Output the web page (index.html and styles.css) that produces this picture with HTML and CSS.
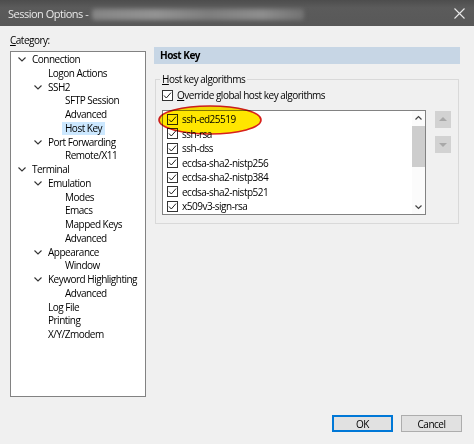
FILE: index.html
```html
<!DOCTYPE html>
<html lang="en">
<head>
    <meta charset="UTF-8">
    <title>Session Options</title>
    <link rel="stylesheet" href="styles.css">
</head>
<body>
    <div class="window">
        <div class="titlebar">
            <span class="title">Session Options -</span>
            <span class="title-blur"></span>
            <svg class="close" width="11" height="11" viewBox="0 0 11 11"><path d="M0.5 0.5 L10.5 10.5 M10.5 0.5 L0.5 10.5" stroke="#e8e8e8" stroke-width="1.1"/></svg>
        </div>

        <div class="content">
            <div class="left-col">
                <div class="label"><u>C</u>ategory:</div>
                <div class="tree">
                    <div class="node l0"><span class="chev"><svg width="8" height="5" viewBox="0 0 8 5"><polyline points="0.5,0.5 4,4 7.5,0.5" fill="none" stroke="#333" stroke-width="1.1"/></svg></span>Connection</div>
                    <div class="node l1"><span class="chev"></span>Logon Actions</div>
                    <div class="node l1"><span class="chev"><svg width="8" height="5" viewBox="0 0 8 5"><polyline points="0.5,0.5 4,4 7.5,0.5" fill="none" stroke="#333" stroke-width="1.1"/></svg></span>SSH2</div>
                    <div class="node l2"><span class="chev"></span>SFTP Session</div>
                    <div class="node l2"><span class="chev"></span>Advanced</div>
                    <div class="node l2"><span class="chev"></span><span class="selected">Host Key</span></div>
                    <div class="node l1"><span class="chev"><svg width="8" height="5" viewBox="0 0 8 5"><polyline points="0.5,0.5 4,4 7.5,0.5" fill="none" stroke="#333" stroke-width="1.1"/></svg></span>Port Forwarding</div>
                    <div class="node l2"><span class="chev"></span>Remote/X11</div>
                    <div class="node l0"><span class="chev"><svg width="8" height="5" viewBox="0 0 8 5"><polyline points="0.5,0.5 4,4 7.5,0.5" fill="none" stroke="#333" stroke-width="1.1"/></svg></span>Terminal</div>
                    <div class="node l1"><span class="chev"><svg width="8" height="5" viewBox="0 0 8 5"><polyline points="0.5,0.5 4,4 7.5,0.5" fill="none" stroke="#333" stroke-width="1.1"/></svg></span>Emulation</div>
                    <div class="node l2"><span class="chev"></span>Modes</div>
                    <div class="node l2"><span class="chev"></span>Emacs</div>
                    <div class="node l2"><span class="chev"></span>Mapped Keys</div>
                    <div class="node l2"><span class="chev"></span>Advanced</div>
                    <div class="node l1"><span class="chev"><svg width="8" height="5" viewBox="0 0 8 5"><polyline points="0.5,0.5 4,4 7.5,0.5" fill="none" stroke="#333" stroke-width="1.1"/></svg></span>Appearance</div>
                    <div class="node l2"><span class="chev"></span>Window</div>
                    <div class="node l1"><span class="chev"><svg width="8" height="5" viewBox="0 0 8 5"><polyline points="0.5,0.5 4,4 7.5,0.5" fill="none" stroke="#333" stroke-width="1.1"/></svg></span>Keyword Highlighting</div>
                    <div class="node l2"><span class="chev"></span>Advanced</div>
                    <div class="node l1"><span class="chev"></span>Log File</div>
                    <div class="node l1"><span class="chev"></span>Printing</div>
                    <div class="node l1"><span class="chev"></span>X/Y/Zmodem</div>
                </div>
            </div>

            <div class="right-col">
                <div class="page-header">Host Key</div>
                <fieldset class="group">
                    <legend><u>H</u>ost key algorithms</legend>
                    <div class="check-row">
                        <svg class="cb" width="11" height="11" viewBox="0 0 11 11"><rect x="0.5" y="0.5" width="10" height="10" fill="#fff" stroke="#333"/><polyline points="2,5.5 4.3,8 9,2.6" fill="none" stroke="#222" stroke-width="1"/></svg>
                        <span><u>O</u>verride global host key algorithms</span>
                    </div>
                    <div class="list-row">
                        <div class="listbox">
                            <div class="items">
                                <div class="item"><svg class="cb" width="11" height="11" viewBox="0 0 11 11"><rect x="0.5" y="0.5" width="10" height="10" fill="#fff" stroke="#333"/><polyline points="2,5.5 4.3,8 9,2.6" fill="none" stroke="#222" stroke-width="1"/></svg>ssh-ed25519</div>
                                <div class="item"><svg class="cb" width="11" height="11" viewBox="0 0 11 11"><rect x="0.5" y="0.5" width="10" height="10" fill="#fff" stroke="#333"/><polyline points="2,5.5 4.3,8 9,2.6" fill="none" stroke="#222" stroke-width="1"/></svg>ssh-rsa</div>
                                <div class="item"><svg class="cb" width="11" height="11" viewBox="0 0 11 11"><rect x="0.5" y="0.5" width="10" height="10" fill="#fff" stroke="#333"/><polyline points="2,5.5 4.3,8 9,2.6" fill="none" stroke="#222" stroke-width="1"/></svg>ssh-dss</div>
                                <div class="item"><svg class="cb" width="11" height="11" viewBox="0 0 11 11"><rect x="0.5" y="0.5" width="10" height="10" fill="#fff" stroke="#333"/><polyline points="2,5.5 4.3,8 9,2.6" fill="none" stroke="#222" stroke-width="1"/></svg>ecdsa-sha2-nistp256</div>
                                <div class="item"><svg class="cb" width="11" height="11" viewBox="0 0 11 11"><rect x="0.5" y="0.5" width="10" height="10" fill="#fff" stroke="#333"/><polyline points="2,5.5 4.3,8 9,2.6" fill="none" stroke="#222" stroke-width="1"/></svg>ecdsa-sha2-nistp384</div>
                                <div class="item"><svg class="cb" width="11" height="11" viewBox="0 0 11 11"><rect x="0.5" y="0.5" width="10" height="10" fill="#fff" stroke="#333"/><polyline points="2,5.5 4.3,8 9,2.6" fill="none" stroke="#222" stroke-width="1"/></svg>ecdsa-sha2-nistp521</div>
                                <div class="item"><svg class="cb" width="11" height="11" viewBox="0 0 11 11"><rect x="0.5" y="0.5" width="10" height="10" fill="#fff" stroke="#333"/><polyline points="2,5.5 4.3,8 9,2.6" fill="none" stroke="#222" stroke-width="1"/></svg>x509v3-sign-rsa</div>
                            </div>
                            <div class="scrollbar">
                                <svg class="sb-arrow" width="13" height="14" viewBox="0 0 13 14"><polyline points="3.5,8.5 6.5,5.5 9.5,8.5" fill="none" stroke="#444" stroke-width="1.2"/></svg>
                                <div class="sb-thumb"></div>
                                <div class="sb-track"></div>
                                <svg class="sb-arrow" width="13" height="14" viewBox="0 0 13 14"><polyline points="3.5,5.5 6.5,8.5 9.5,5.5" fill="none" stroke="#444" stroke-width="1.2"/></svg>
                            </div>
                        </div>
                        <div class="move-buttons">
                            <div class="move-btn"><svg width="16" height="17" viewBox="0 0 16 17"><polygon points="4,10 8,6 12,10" fill="#a8a8a8"/></svg></div>
                            <div class="move-btn"><svg width="16" height="17" viewBox="0 0 16 17"><polygon points="4,7 8,11 12,7" fill="#a8a8a8"/></svg></div>
                        </div>
                        <!-- annotation drawn over the first row -->
                        <svg class="highlight" width="106" height="32" viewBox="0 0 106 32"><ellipse cx="53" cy="16" rx="51" ry="14" fill="#ffe600" stroke="#d8201c" stroke-width="1.6"/></svg>
                    </div>
                </fieldset>
            </div>
        </div>

        <div class="buttons">
            <button class="btn default">OK</button>
            <button class="btn">Cancel</button>
        </div>
    </div>
</body>
</html>
```

FILE: styles.css
```css
:root {
    --dialog-bg: #f0f0f0;
    --title-bg: #575757;
    --text: #000;
    --border: #828282;
    --group-border: #d9d9d9;
    --select-bg: #cce8ff;
    --header-bg: #c7d6e5;
}

body {
    margin: 0;
    padding: 0;
    font-family: "Open Sans", "Noto Sans", sans-serif;
    font-size: 10px;
    letter-spacing: -0.5px;
    color: var(--text);
}

.window {
    width: 474px;
    height: 444px;
    background-color: var(--dialog-bg);
    display: flex;
    flex-direction: column;
    overflow: hidden;
}

.titlebar {
    height: 26px;
    background: linear-gradient(#4d4d4d, #5b5b5b 30%, #585858);
    display: flex;
    align-items: center;
    padding-left: 8px;
    color: #e9e9e9;
    font-size: 11px;
}

.title-blur {
    width: 212px;
    height: 11px;
    margin-left: 4px;
    margin-top: 3px;
    background: linear-gradient(90deg, #858585, #939393 30%, #7e7e7e 55%, #8e8e8e 80%, #727272);
    border-radius: 3px;
    filter: blur(2px);
}

.close {
    margin-left: auto;
    margin-right: 9px;
}

.content {
    flex: 1;
    display: flex;
    gap: 8px;
    padding: 8px 0 0 10px;
}

.left-col {
    width: 136px;
}

.label {
    line-height: 12px;
    margin-bottom: 5px;
}

.tree {
    height: 346px;
    box-sizing: border-box;
    background-color: #fff;
    border: 1px solid var(--border);
    padding-top: 1px;
}

.node {
    height: 13.75px;
    line-height: 13.75px;
    display: flex;
    align-items: center;
    white-space: nowrap;
}

.l0 { padding-left: 5px; }
.l1 { padding-left: 21px; }
.l2 { padding-left: 38px; }

.chev {
    width: 11px;
    margin-right: 5px;
    display: flex;
    justify-content: center;
    align-items: center;
}

.selected {
    background-color: var(--select-bg);
    padding: 0 3px;
    margin-left: -3px;
    line-height: 12.5px;
}

.right-col {
    width: 306px;
    margin-top: 13px;
}

.page-header {
    height: 17px;
    line-height: 17px;
    background-color: var(--header-bg);
    padding-left: 6px;
    font-weight: bold;
}

.group {
    margin: 9px 1px 0 1px;
    border: 1px solid var(--group-border);
    padding: 3px 7px 8px 6px;
}

.group legend {
    line-height: 12px;
    padding: 0 2px;
    margin-left: -2px;
}

.check-row {
    height: 14px;
    display: flex;
    align-items: center;
    gap: 4px;
    margin-bottom: 8px;
}

.list-row {
    position: relative;
    display: flex;
    gap: 9px;
}

.listbox {
    width: 264px;
    height: 105px;
    box-sizing: border-box;
    border: 1px solid var(--border);
    background-color: #fff;
    display: flex;
    overflow: hidden;
}

.items {
    flex: 1;
    padding-top: 1px;
}

.item {
    height: 14.5px;
    display: flex;
    align-items: center;
    gap: 4px;
    padding-left: 4px;
    white-space: nowrap;
}

.scrollbar {
    width: 13px;
    display: flex;
    flex-direction: column;
    background-color: #fbfbfb;
}

.sb-thumb {
    height: 41px;
    margin-top: 1px;
    background-color: #cdcdcd;
}

.sb-track {
    flex: 1;
}

.move-buttons {
    display: flex;
    flex-direction: column;
    gap: 8px;
    padding-top: 1px;
}

.move-btn {
    width: 16px;
    height: 17px;
    background-color: #d2d2d2;
}

.move-btn svg {
    display: block;
}

.highlight {
    position: absolute;
    left: -5px;
    top: -6px;
    mix-blend-mode: multiply;
}

.buttons {
    display: flex;
    justify-content: flex-end;
    gap: 8px;
    padding: 0 12px 12px 0;
}

.btn {
    width: 61px;
    height: 17px;
    padding: 0;
    font-family: inherit;
    font-size: 10px;
    letter-spacing: inherit;
    color: var(--text);
    background-color: #e1e1e1;
    border: 1px solid #adadad;
}

.btn.default {
    border: 2px solid #0078d7;
}
```
